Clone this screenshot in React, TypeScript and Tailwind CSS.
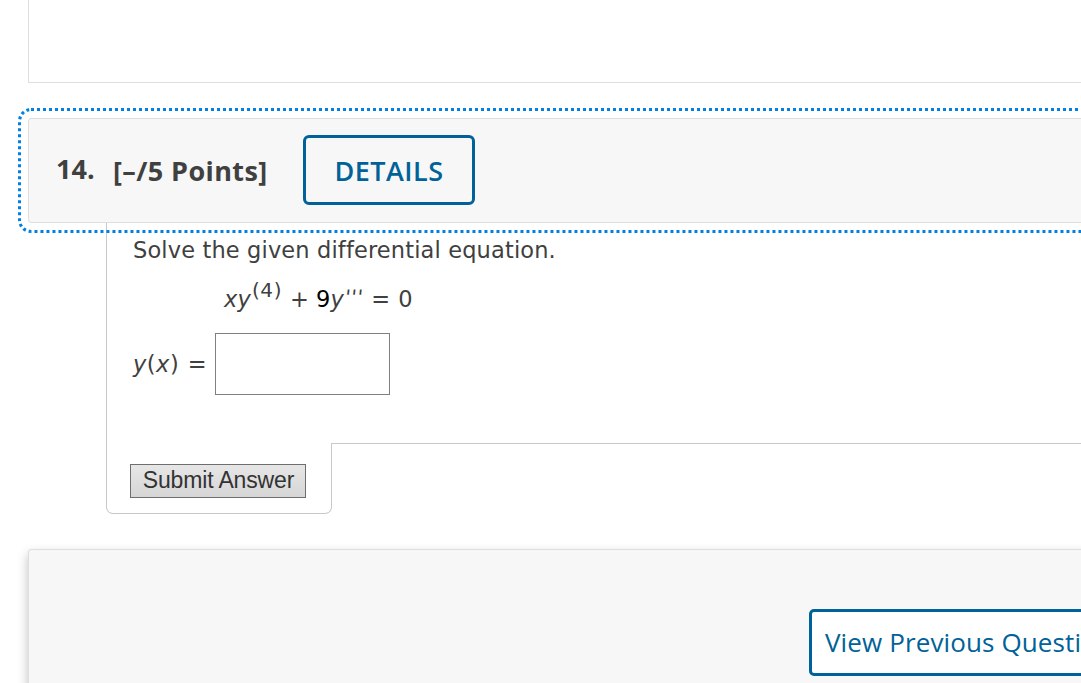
function QuestionHeader() {
  return (
    <div className="relative z-10 mt-[35px] -mr-10 flex h-[105px] items-start rounded-[3px] border border-[#dedede] bg-[#f7f7f7] font-['Open_Sans',sans-serif] outline-[3px] outline-dotted outline-[#0080e4] outline-offset-[7px]">
      <div className="mt-[31px] ml-[27px] w-[57px] text-[27px] leading-[37px] font-bold whitespace-nowrap text-[#404040]">14.</div>
      <div className="mt-[33px] w-[190px] text-[27px] leading-[37px] font-bold tracking-[0.4px] whitespace-nowrap text-[#404040]">[–/5 Points]</div>
      <button className="mt-[16px] h-[70px] w-[172px] rounded-[6px] border-3 border-[#006298] pt-[2px] text-[27px] font-semibold tracking-[0.5px] text-[#006298]">
        DETAILS
      </button>
    </div>
  )
}

function QuestionBody() {
  return (
    <div className="ml-[78px] font-['DejaVu_Sans',sans-serif] text-[22.5px] tracking-[0.14px] text-[#404040]">
      <div className="h-[220px] border-l border-[#c8c8c8] pl-[26px] whitespace-nowrap">
        <p className="pt-[11px] leading-[32px]">Solve the given differential equation.</p>
        <p className="mt-[17px] ml-[91px] h-[32px] leading-[32px] [word-spacing:0.7px]">
          <i>xy</i>
          <span className="relative -top-[10px] ml-px text-[20px] leading-none tracking-[0.6px]">(4)</span> + <span className="-ml-px text-black">9</span>
          <i>y</i>
          <i className="ml-px inline-block -translate-y-[3px] -skew-x-6 text-[20px] leading-none tracking-[0.6px]">'''</i> = 0
        </p>
        <div className="mt-[18px] flex items-center">
          <label htmlFor="answer" className="w-[82px] pt-px tracking-[0.5px] [word-spacing:1px]">
            <i>y</i>(<i>x</i>) =
          </label>
          <input id="answer" className="h-[62px] w-[175px] border border-[#808080] bg-white px-2" />
        </div>
      </div>

      {/* Submit tab hangs below the body's bottom rule */}
      <div className="-mr-10 flex">
        <div className="h-[71px] w-[226px] rounded-b-[7px] border border-t-0 border-[#c8c8c8] pt-[21px] pl-[23px]">
          <button className="block h-[34px] w-[176px] border border-[#6e6e6e] bg-linear-to-b from-[#e6e6e6] to-[#d6d6d6] pb-[2px] pl-px font-['Liberation_Sans',sans-serif] text-[23px] leading-[29px] tracking-[-0.15px] whitespace-nowrap text-[#333333]">
            Submit Answer
          </button>
        </div>
        <div className="flex-1 border-t border-[#c8c8c8]" />
      </div>
    </div>
  )
}

function QuestionFooter() {
  return (
    <div className="mt-[35px] -mr-10 h-[200px] rounded-[3px] border border-[#dedede] bg-[#f7f7f7] pt-[59px] pl-[780px] shadow-[0_5px_11px_rgba(0,0,0,0.25)]">
      <button className="h-[67px] w-[340px] rounded-[5px] border-3 border-[#006298] bg-white pl-[13px] text-left font-['Open_Sans',sans-serif] text-[26px] tracking-[0.12px] whitespace-nowrap text-[#006298]">
        View Previous Question
      </button>
    </div>
  )
}

export default function App() {
  return (
    <div className="h-[683px] w-full overflow-hidden bg-white pl-[28px]">
      <div className="-mr-10 h-[83px] border-b border-l border-[#dedede]" />
      <QuestionHeader />
      <QuestionBody />
      <QuestionFooter />
    </div>
  )
}
